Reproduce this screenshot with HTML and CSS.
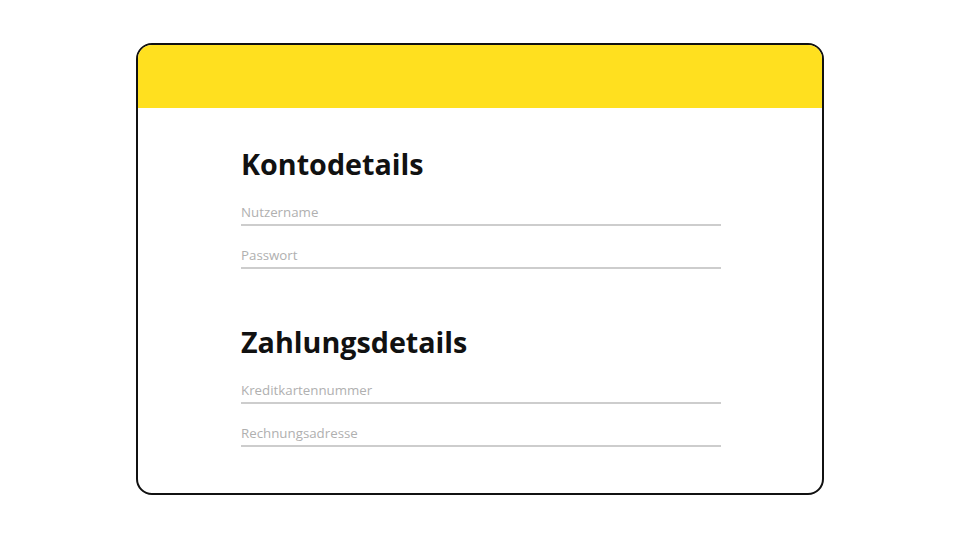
FILE: index.html
```html
<!DOCTYPE html>
<html lang="de">
<head>
    <meta charset="UTF-8">
    <meta name="viewport" content="width=device-width, initial-scale=1.0">
    <title>Konto anlegen</title>
    <link rel="stylesheet" href="styles.css">
</head>
<body>
    <div class="karte">
        <div class="kopf"></div>
        <form class="formular">
            <section class="gruppe">
                <h2>Kontodetails</h2>
                <label class="feld"><input type="text" placeholder="Nutzername"></label>
                <label class="feld"><input type="password" placeholder="Passwort"></label>
            </section>
            <section class="gruppe">
                <h2>Zahlungsdetails</h2>
                <label class="feld"><input type="text" placeholder="Kreditkartennummer"></label>
                <label class="feld"><input type="text" placeholder="Rechnungsadresse"></label>
            </section>
        </form>
    </div>
</body>
</html>
```

FILE: styles.css
```css
html, body {
    height: 100%;
}

body {
    font-family: "Open Sans", "Noto Sans", sans-serif;
    background-color: #fff;
    margin: 0;
    display: flex;
    align-items: center;
    justify-content: center;
}

.karte {
    width: 688px;
    height: 452px;
    box-sizing: border-box;
    border: 2px solid #111;
    border-radius: 16px;
    overflow: hidden;
    background-color: #fff;
}

.kopf {
    height: 63px;
    background-color: #ffe01f;
}

.formular {
    padding: 37px 0 0 103px;
    width: 480px;
}

.gruppe {
    margin-bottom: 54px;
}

.gruppe h2 {
    font-size: 28.7px;
    font-weight: 700;
    color: #111;
    margin: 0 0 14px;
    line-height: 38px;
}

.feld {
    display: block;
    border-bottom: 2px solid #cdcdcd;
    margin-bottom: 14px;
}

.feld input {
    display: block;
    width: 100%;
    border: none;
    outline: none;
    padding: 6px 0 3px;
    font-family: inherit;
    font-size: 13.3px;
    line-height: 18px;
    color: #333;
    background: transparent;
}

.feld input::placeholder {
    color: #b0b0b0;
}
```
